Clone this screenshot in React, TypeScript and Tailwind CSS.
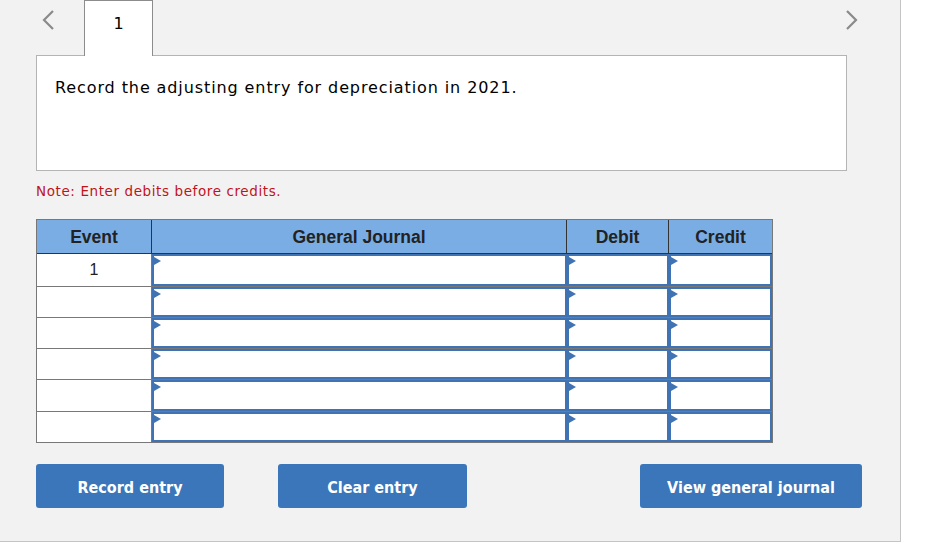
import React from 'react';

const rows = [0, 1, 2, 3, 4, 5];

function Arrow({ dir }: { dir: 'left' | 'right' }) {
  return (
    <svg width="14" height="22" viewBox="0 0 14 22" className="text-[#8a8a8a]">
      <path
        d={dir === 'left' ? 'M12 2 L3 11 L12 20' : 'M2 2 L11 11 L2 20'}
        fill="none"
        stroke="currentColor"
        strokeWidth="2.2"
      />
    </svg>
  );
}

function InputCell({ width }: { width: string }) {
  return (
    <div className={`relative ${width} h-full bg-white border-2 border-[#3f73b3]`}>
      <span className="absolute left-0 top-[1px] w-0 h-0 border-y-[4px] border-y-transparent border-l-[7px] border-l-[#3f73b3]" />
    </div>
  );
}

export default function App() {
  return (
    <div className="w-[947px] h-[554px] bg-white" style={{ fontFamily: '"DejaVu Sans", Verdana, sans-serif' }}>
      <div className="w-[901px] h-[542px] bg-[#f2f2f2] border-r border-b border-[#c4c4c4] relative">
        <div className="flex items-start h-[55px]">
          <div className="w-[36px]" />
          <div className="w-[48px] pt-[9px] pl-[5px]">
            <Arrow dir="left" />
          </div>
          <div className="w-[69px] h-[56px] bg-white border border-b-0 border-[#8c8c8c] flex justify-center pt-[11px] text-[16px] text-black relative z-10">
            1
          </div>
          <div className="flex-1" />
          <div className="w-[55px] pt-[9px] pl-[0px]">
            <Arrow dir="right" />
          </div>
        </div>
        <div className="ml-[36px] w-[811px] h-[116px] bg-white border border-[#b4b4b4] px-[18px] pt-[20px] text-[16px] tracking-[0.9px] text-black">
          Record the adjusting entry for depreciation in 2021.
        </div>
        <div className="ml-[36px] mt-[10px] text-[13.5px] tracking-[0.6px] text-[#c0141b]">Note: Enter debits before credits.</div>

        <div className="ml-[36px] mt-[18px] w-[737px] border border-[#787878]" style={{ fontFamily: '"Liberation Sans", Arial, sans-serif' }}>
          <div className="flex h-[34px] bg-[#7aade4] text-[17.5px] font-bold text-[#222] border-b border-[#333]">
            <div className="w-[115px] flex items-center justify-center border-r border-[#333]">Event</div>
            <div className="w-[415px] flex items-center justify-center border-r border-[#333]">General Journal</div>
            <div className="w-[102px] flex items-center justify-center border-r border-[#333]">Debit</div>
            <div className="flex-1 flex items-center justify-center">Credit</div>
          </div>
          {rows.map((r) => (
            <div key={r} className={`flex h-[31.3px] ${r > 0 ? 'border-t border-[#787878]' : ''}`}>
              <div className="w-[115px] h-full bg-white border-r border-[#787878] flex items-center justify-center text-[16px] text-[#222]">
                {r === 0 ? '1' : ''}
              </div>
              <InputCell width="w-[415px]" />
              <InputCell width="w-[102px]" />
              <InputCell width="flex-1" />
            </div>
          ))}
        </div>

        <div className="flex mt-[21px] ml-[36px]" style={{ fontFamily: '"DejaVu Sans Condensed", "DejaVu Sans", sans-serif' }}>
          <button className="w-[188px] h-[44px] pt-[3px] bg-[#3a76b9] rounded-[3px] text-white font-bold text-[16px]">Record entry</button>
          <button className="ml-[54px] w-[189px] h-[44px] pt-[3px] bg-[#3a76b9] rounded-[3px] text-white font-bold text-[16px]">Clear entry</button>
          <button className="ml-[173px] w-[222px] h-[44px] pt-[3px] bg-[#3a76b9] rounded-[3px] text-white font-bold text-[16px]">View general journal</button>
        </div>
      </div>
    </div>
  );
}
